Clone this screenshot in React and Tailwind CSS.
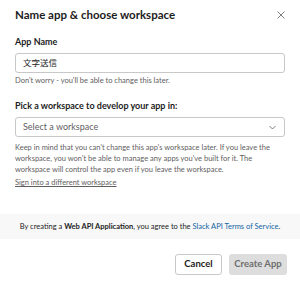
import React from "react";

export default function App() {
  return (
    <div className="w-[300px] h-[282px] bg-white overflow-hidden text-[#1d1c1d]" style={{ fontFamily: 'Lato, "Noto Sans CJK JP", sans-serif' }}>
      <div className="h-[30px] flex items-center justify-between pl-[15px] pr-[15px]">
        <h1 className="text-[11.5px] font-bold leading-none">Name app &amp; choose workspace</h1>
        <svg width="8" height="8" viewBox="0 0 8 8" className="text-[#616061]">
          <path d="M0.5 0.5 L7.5 7.5 M7.5 0.5 L0.5 7.5" stroke="currentColor" strokeWidth="0.8" />
        </svg>
      </div>
      <div className="px-[15px]">
        <div className="mt-[7px] text-[9px] font-bold leading-[10px]">App Name</div>
        <div className="mt-[6px] h-[20px] border border-[#c8c8c8] rounded-[3px] flex items-center pl-[7px] text-[8.5px]">
          文字送信
        </div>
        <div className="mt-[3px] text-[7.5px] leading-[10px] text-[#616061]">Don't worry - you'll be able to change this later.</div>
        <div className="mt-[15px] text-[9px] font-bold leading-[10px]">Pick a workspace to develop your app in:</div>
        <div className="mt-[6px] h-[20px] border border-[#c8c8c8] rounded-[3px] flex items-center justify-between pl-[7px] pr-[8px] text-[9px] text-[#616061]">
          <span>Select a workspace</span>
          <svg width="7" height="5" viewBox="0 0 7 5">
            <path d="M0.5 1 L3.5 4 L6.5 1" stroke="#616061" strokeWidth="0.8" fill="none" />
          </svg>
        </div>
        <p className="mt-[4.5px] text-[7.5px] leading-[11px] text-[#616061] whitespace-nowrap">
          Keep in mind that you can't change this app's workspace later. If you leave the
          <br />
          workspace, you won't be able to manage any apps you've built for it. The
          <br />
          workspace will control the app even if you leave the workspace.
        </p>
        <div className="mt-[3.5px] text-[7.5px] leading-[10px] text-[#616061] underline">Sign into a different workspace</div>
      </div>
      <div className="mt-[26px] h-[25px] bg-[#f8f8f8] flex items-center justify-center text-[7.5px] text-[#1d1c1d] whitespace-nowrap">
        <span>
          By creating a <b>Web API Application</b>, you agree to the <span className="text-[#1264a3]">Slack API Terms of Service</span>.
        </span>
      </div>
      <div className="mt-[15px] flex justify-end gap-[7px] pr-[13px]">
        <button className="h-[21px] w-[47px] border border-[#c8c8c8] rounded-[3px] bg-white text-[9.5px] font-bold text-[#1d1c1d]">Cancel</button>
        <button className="h-[21px] w-[58px] rounded-[3px] bg-[#dddddd] text-[9.5px] font-bold text-[#6e6e6e]">Create App</button>
      </div>
    </div>
  );
}
